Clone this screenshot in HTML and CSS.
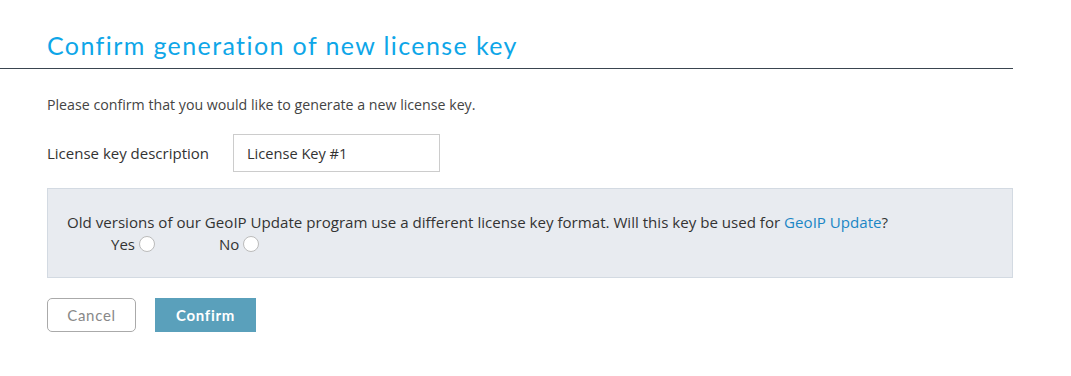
FILE: index.html
```html
<!DOCTYPE html>
<html>
<head>
    <meta charset="UTF-8">
    <title>Confirm generation of new license key</title>
    <link rel="stylesheet" href="styles.css">
</head>
<body>
<div class="page">
    <h1 class="page-title">Confirm generation of new license key</h1>
    <div class="content">
        <p class="intro">Please confirm that you would like to generate a new license key.</p>
        <div class="field"><!-- Description -->
            <label class="field-label" for="description">License key description</label>
            <input id="description" class="field-input" type="text" value="License Key #1">
        </div>
        <div class="notice"><!-- GeoIP Update question -->
            <div class="notice-text">Old versions of our GeoIP Update program use a different license key format. Will this key be used for <a href="#" class="link">GeoIP Update</a>?</div>
            <div class="choices">
                <label class="choice">Yes<input type="radio" name="geoipupdate" class="radio"></label>
                <label class="choice">No<input type="radio" name="geoipupdate" class="radio"></label>
            </div>
        </div>
        <div class="actions"><!-- Buttons -->
            <button class="button button-cancel">Cancel</button>
            <button class="button button-confirm">Confirm</button>
        </div>
    </div>
</div>
</body>
</html>
```

FILE: styles.css
```css
body {
    margin: 0;
    font-family: "Open Sans", sans-serif;
    font-size: 14.2px;
    color: #333;
    background: white;
}

.page {
    width: 1013px;
    padding-top: 30px;
}

/* Title */
.page-title {
    margin: 0;
    padding: 0 0 8px 47px;
    font-family: "Lato", sans-serif;
    font-weight: 400;
    font-size: 25px;
    letter-spacing: 1.4px;
    line-height: 30px;
    color: #0ea6e8;
    border-bottom: 1px solid #3a4550;
}

.content {
    padding-left: 47px;
}

.intro {
    margin: 26px 0 0;
    line-height: 20px;
    color: #444;
}

/* Description */
.field {
    display: flex;
    align-items: center;
    margin-top: 19px;
}

.field-label {
    width: 186px;
    font-size: 15px;
}

.field-input {
    box-sizing: border-box;
    width: 207px;
    height: 38px;
    padding: 0 13px;
    font-family: "Open Sans", sans-serif;
    font-size: 14.6px;
    color: #333;
    border: 1px solid #ccc;
    border-radius: 0;
    outline: 0;
}

/* Notice */
.notice {
    margin-top: 16px;
    height: 90px;
    box-sizing: border-box;
    padding: 21px 19px 0;
    background-color: #e8ebf0;
    border: 1px solid #d3dae2;
}

.notice-text {
    font-size: 15.1px;
    line-height: 24px;
}

.link {
    color: #1b86c5;
    text-decoration: none;
}

.choices {
    display: flex;
    padding-left: 44px;
    gap: 64px;
}

.choice {
    display: flex;
    align-items: center;
    font-size: 15px;
}

.radio {
    appearance: none;
    width: 16px;
    height: 16px;
    margin: 0 0 0 4px;
    background: white;
    border: 1px solid #bbb;
    border-radius: 50%;
}

/* Buttons */
.actions {
    display: flex;
    gap: 19px;
    margin-top: 20px;
}

.button {
    height: 34px;
    font-family: "Lato", sans-serif;
    font-size: 15px;
    letter-spacing: 0.7px;
    border-radius: 0;
    cursor: pointer;
}

.button-cancel {
    width: 89px;
    color: #888;
    background: white;
    border: 1px solid #aaa;
    border-radius: 5px;
}

.button-confirm {
    width: 101px;
    color: white;
    font-weight: 700;
    background-color: #5aa0bb;
    border: none;
}
```
